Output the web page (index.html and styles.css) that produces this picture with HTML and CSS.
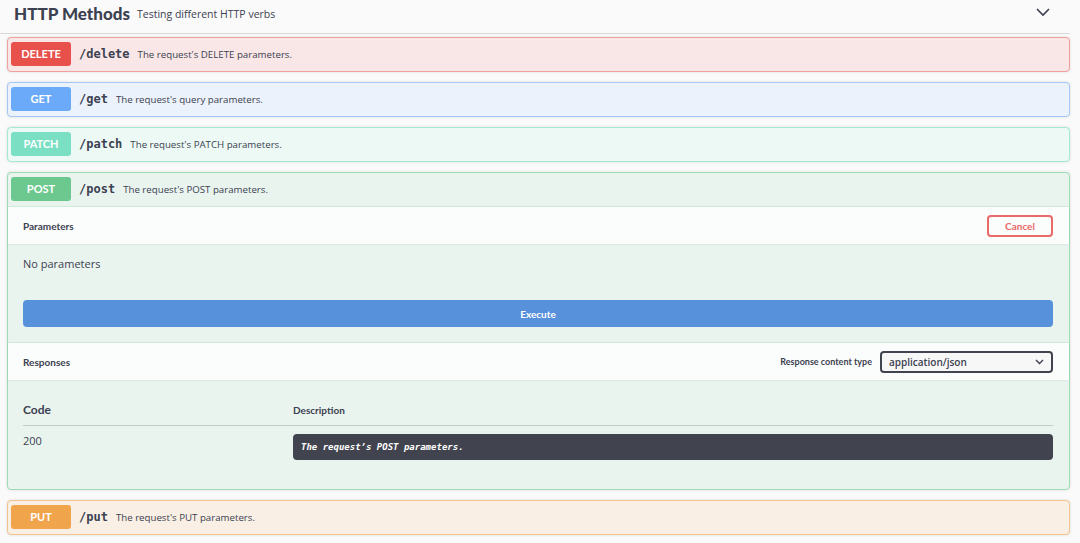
FILE: index.html
```html
<!DOCTYPE html>
<html lang="en">
<head>
    <meta charset="UTF-8">
    <title>HTTP Methods</title>
    <link rel="stylesheet" href="styles.css">
</head>
<body>

    <!-- Tag header -->
    <div class="tag-head">
        <h3>HTTP Methods</h3>
        <span class="tag-desc">Testing different HTTP verbs</span>
        <svg class="tag-arrow" width="14" height="9" viewBox="0 0 14 9">
            <polyline points="1,1 7,7 13,1" fill="none" stroke="#3b4151" stroke-width="1.6"/>
        </svg>
    </div>

    <div class="opblock op-delete">
        <div class="summary">
            <span class="method">DELETE</span>
            <span class="path">/delete</span>
            <span class="summary-desc">The request's DELETE parameters.</span>
        </div>
    </div>

    <div class="opblock op-get">
        <div class="summary">
            <span class="method">GET</span>
            <span class="path">/get</span>
            <span class="summary-desc">The request's query parameters.</span>
        </div>
    </div>

    <div class="opblock op-patch">
        <div class="summary">
            <span class="method">PATCH</span>
            <span class="path">/patch</span>
            <span class="summary-desc">The request's PATCH parameters.</span>
        </div>
    </div>

    <div class="opblock op-post">
        <div class="summary">
            <span class="method">POST</span>
            <span class="path">/post</span>
            <span class="summary-desc">The request's POST parameters.</span>
        </div>

        <div class="section-head">
            <h4>Parameters</h4>
            <button class="btn-cancel">Cancel</button>
        </div>
        <div class="section-body">
            <p class="no-params">No parameters</p>
            <button class="btn-execute">Execute</button>
        </div>

        <div class="section-head">
            <h4>Responses</h4>
            <div class="content-type">
                <label>Response content type</label>
                <div class="select">
                    <span>application/json</span>
                    <svg width="9" height="6" viewBox="0 0 9 6">
                        <polyline points="1,1 4.5,4.5 8,1" fill="none" stroke="#3b4151" stroke-width="1.4"/>
                    </svg>
                </div>
            </div>
        </div>
        <div class="responses">
            <div class="resp-table">
                <div class="col-code head">Code</div>
                <div class="col-desc head">Description</div>
                <div class="col-code">200</div>
                <div class="col-desc">
                    <div class="markdown">The request’s POST parameters.</div>
                </div>
            </div>
        </div>
    </div>

    <div class="opblock op-put">
        <div class="summary">
            <span class="method">PUT</span>
            <span class="path">/put</span>
            <span class="summary-desc">The request's PUT parameters.</span>
        </div>
    </div>

</body>
</html>
```

FILE: styles.css
```css
body {
    font-family: "Open Sans", sans-serif;
    background: #fafafa;
    color: #3b4151;
    margin: 0;
    padding: 0 10px 0 7px;
}

.tag-head {
    display: flex;
    align-items: center;
    height: 33px;
    margin: 0 0 3px -7px;
    padding-left: 14px;
    border-bottom: 1px solid #d9d9da;
}

.tag-head h3 {
    margin: 0;
    font-family: Lato, sans-serif;
    font-size: 17px;
    font-weight: 900;
    position: relative;
    top: -3px;
}

.tag-desc {
    font-size: 10.5px;
    margin-left: 7px;
    position: relative;
    top: -3px;
}

.tag-arrow {
    margin-left: auto;
    margin-right: 20px;
    position: relative;
    top: -4px;
}

.opblock {
    border: 1px solid;
    border-radius: 4px;
    margin-bottom: 10px;
    box-shadow: 0 0 3px rgba(0, 0, 0, .12);
}

.summary {
    display: flex;
    align-items: center;
    padding: 4px 3px 5px;
}

.method {
    width: 60px;
    height: 24px;
    line-height: 24px;
    text-align: center;
    border-radius: 3px;
    color: white;
    font-family: Lato, sans-serif;
    font-size: 11px;
    font-weight: 700;
}

.path {
    font-family: "DejaVu Sans Mono", monospace;
    font-weight: 700;
    font-size: 12px;
    margin-left: 8px;
}

.summary-desc {
    font-size: 9.7px;
    margin-left: 8px;
}

.op-delete { background: #f9e7e7; border-color: #efa09e; }
.op-delete .method { background: #e8504c; }

.op-get { background: #ebf2fb; border-color: #a4c8f5; }
.op-get .method { background: #6aaaf8; }

.op-patch { background: #edf9f5; border-color: #a5e8d4; }
.op-patch .method { background: #7adfc3; }

.op-post { background: #eaf4ef; border-color: #9ddcb5; }
.op-post .method { background: #6cc88f; }

.op-put { background: #f9efe5; border-color: #f2c48e; }
.op-put .method { background: #f0a44c; }

.section-head {
    display: flex;
    align-items: center;
    height: 37px;
    padding: 0 16px 0 15px;
    background: rgba(255, 255, 255, .8);
    box-shadow: 0 1px 2px rgba(0, 0, 0, .06);
    border-top: 1px solid #cfeadb;
}

.section-head h4 {
    margin: 0;
    font-family: Lato, sans-serif;
    font-size: 10px;
    font-weight: 700;
}

.btn-cancel {
    margin-left: auto;
    width: 66px;
    height: 22px;
    border: 2px solid #e96a68;
    border-radius: 4px;
    background: transparent;
    color: #e96a68;
    font-family: Lato, sans-serif;
    font-size: 10px;
    font-weight: 700;
}

.section-body {
    padding: 12px 16px 15px 15px;
}

.no-params {
    margin: 0 0 29px;
    font-size: 11px;
}

.btn-execute {
    display: block;
    width: 100%;
    height: 27px;
    border: none;
    border-radius: 4px;
    background: #5790db;
    color: white;
    font-family: Lato, sans-serif;
    font-size: 10px;
    font-weight: 700;
}

.content-type {
    margin-left: auto;
    display: flex;
    align-items: center;
}

.content-type label {
    font-family: Lato, sans-serif;
    font-size: 9px;
    font-weight: 700;
    margin-right: 8px;
}

.select {
    display: flex;
    align-items: center;
    justify-content: space-between;
    width: 155px;
    height: 18px;
    padding: 0 7px;
    border: 2px solid #41444e;
    border-radius: 4px;
    background: #f7f7f7;
    font-size: 10px;
    font-weight: 600;
}

.responses {
    padding: 14px 16px 29px 15px;
}

.resp-table {
    display: grid;
    grid-template-columns: 270px 1fr;
}

.col-code.head, .col-desc.head {
    display: flex;
    align-items: center;
    height: 31px;
    padding: 0;
    font-family: Lato, sans-serif;
    font-weight: 700;
    border-bottom: 1px solid #c6cacd;
}

.col-code.head { font-size: 12px; }
.col-desc.head { font-size: 10px; }

.col-code {
    font-size: 11px;
    padding-top: 7px;
}

.col-desc {
    padding-top: 8px;
}

.markdown {
    background: #41444e;
    color: white;
    border-radius: 4px;
    height: 26px;
    line-height: 26px;
    padding-left: 8px;
    font-family: "DejaVu Sans Mono", monospace;
    font-style: italic;
    font-weight: 700;
    font-size: 9px;
}
```
